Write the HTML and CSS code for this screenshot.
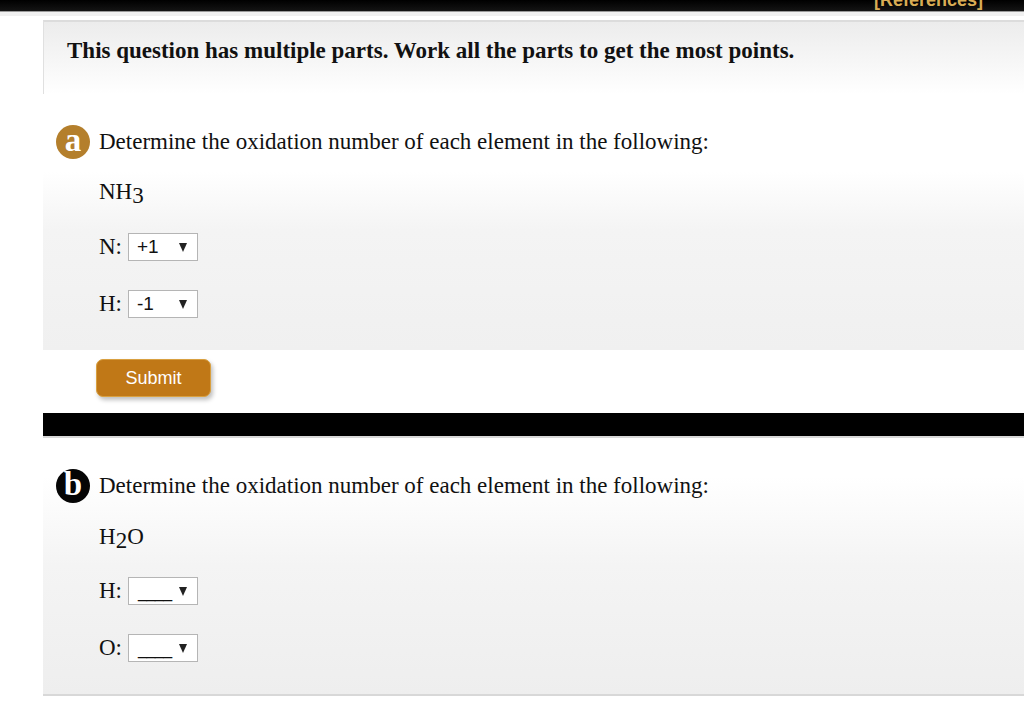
FILE: index.html
```
<!DOCTYPE html>
<html>
<head>
<meta charset="utf-8">
<link rel="stylesheet" href="styles.css">
</head>
<body>
<div class="topbar"><span class="refs">[References]</span></div>
<div class="strip"></div>
<div class="page">
  <div class="intro">This question has multiple parts. Work all the parts to get the most points.</div>
  <div class="part part-a">
    <div class="qline"><span class="badge badge-a">a</span><span class="qtext">Determine the oxidation number of each element in the following:</span></div>
    <div class="formula">NH<sub>3</sub></div>
    <div class="row"><span class="lbl">N:</span><div class="sel"><span class="val">+1</span><span class="arr"></span></div></div>
    <div class="row"><span class="lbl">H:</span><div class="sel"><span class="val">-1</span><span class="arr"></span></div></div>
  </div>
  <div class="actions"><button class="submit">Submit</button></div>
  <div class="divider"></div>
  <div class="part part-b">
    <div class="qline"><span class="badge badge-b">b</span><span class="qtext">Determine the oxidation number of each element in the following:</span></div>
    <div class="formula">H<sub>2</sub>O</div>
    <div class="row"><span class="lbl">H:</span><div class="sel"><span class="val blank">____</span><span class="arr"></span></div></div>
    <div class="row"><span class="lbl">O:</span><div class="sel"><span class="val blank">____</span><span class="arr"></span></div></div>
  </div>
</div>
</body>
</html>
```
FILE: styles.css
```
html, body { margin: 0; padding: 0; background: #fff; }
body { font-family: "Liberation Serif", "Times New Roman", serif; color: #111; width: 1024px; height: 706px; overflow: hidden; }
.topbar { height: 11px; background: linear-gradient(#000, #141414); position: relative; overflow: hidden; border-bottom: 1px solid #9a9a9a; }
.refs { position: absolute; left: 874px; top: -9px; font-family: "Liberation Sans", Arial, sans-serif; font-weight: bold; font-size: 18px; line-height: 18px; color: #d9ad55; }
.strip { height: 4px; background: #f0f0f0; }
.page { margin: 4px 0 0 43px; }
.intro { height: 74px; box-sizing: border-box; border-top: 2px solid #dcdcdc; border-left: 1px solid #e0e0e0; background: linear-gradient(#ececec, #fff); padding: 16px 0 0 23px; font-weight: bold; font-size: 23px; line-height: 26px; color: #111; }
.part { padding-left: 13px; box-sizing: border-box; }
.part-a { margin-top: 18px; height: 238px; background: linear-gradient(#fff 0%, #fff 25%, #f4f4f4 50%, #f0f0f0 100%); padding-top: 13px; }
.part-b { height: 258px; background: linear-gradient(#fff 0%, #fff 15%, #f4f4f4 50%, #eeeeee 100%); padding-top: 31px; border-bottom: 2px solid #d8d8d8; }
.qline { display: flex; align-items: center; height: 34px; }
.badge { width: 34px; height: 34px; border-radius: 50%; display: flex; align-items: center; justify-content: center; color: #fff; font-size: 33px; font-weight: bold; line-height: 1; margin-right: 9px; padding-bottom: 4px; box-sizing: border-box; flex: none; }
.badge-a { background: #b47f2c; }
.badge-b { background: #050505; }
.qtext { font-size: 23px; line-height: 26px; color: #111; }
.formula { margin: 16px 0 0 43px; font-size: 23px; line-height: 34px; height: 34px; color: #111; }
.part-b .formula { margin-top: 17px; }
.formula sub { font-size: 23px; vertical-align: -4px; line-height: 0; }
.row { display: flex; align-items: center; margin: 29px 0 0 43px; height: 28px; }
.formula + .row { margin-top: 24px; }
.part-b .formula + .row { margin-top: 23px; }
.lbl { font-size: 23px; width: 29px; }
.sel { width: 70px; height: 28px; box-sizing: border-box; border: 1px solid #b5b5b5; background: #fff; display: flex; align-items: center; justify-content: space-between; padding: 0 10px 0 8px; font-family: "Liberation Sans", Arial, sans-serif; font-size: 19px; color: #111; }
.val.blank { letter-spacing: -0.5px; padding-top: 4px; font-size: 16px; padding-left: 1px; }
.arr { width: 0; height: 0; border-left: 4.5px solid transparent; border-right: 4.5px solid transparent; border-top: 9px solid #222; }
.actions { padding: 9px 0 16px 53px; }
.submit { display: block; width: 115px; height: 38px; border-radius: 7px; border: 1px solid #d9a040; background: #c07817; color: #fff; font-family: "Liberation Sans", Arial, sans-serif; font-size: 18px; box-shadow: 2px 3px 4px rgba(0,0,0,0.25); padding: 0; }
.divider { height: 23px; background: #000; border-bottom: 2px solid #d8d8d8; }
```
